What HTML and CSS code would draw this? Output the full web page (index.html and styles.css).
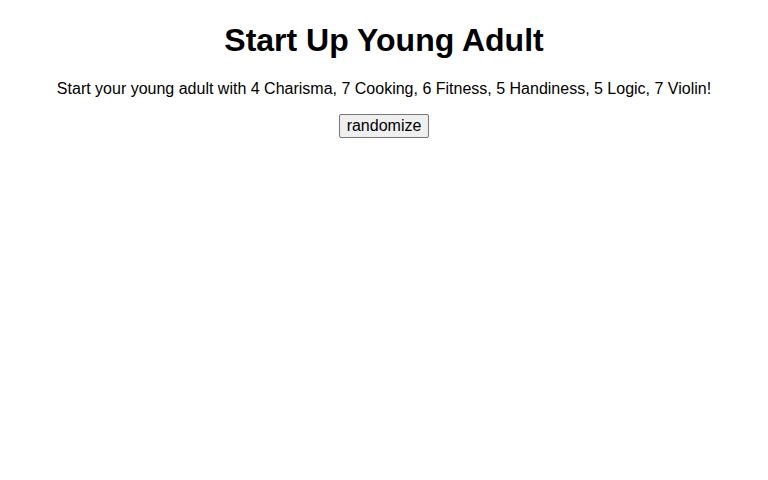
FILE: index.html
```html
<!DOCTYPE html>
<html lang="en">
<head>
<meta charset="utf-8">
<title>Start Up Young Adult</title>
<link rel="stylesheet" href="styles.css">
</head>
<body>
<main class="page">
  <h1 class="title">Start Up Young Adult</h1>
  <p class="result">Start your young adult with 4 Charisma, 7 Cooking, 6 Fitness, 5 Handiness, 5 Logic, 7 Violin!</p>
  <button class="randomize" type="button">randomize</button>
</main>
</body>
</html>
```
FILE: styles.css
```css
body {
  margin: 8px;
  font-family: "Liberation Sans", Arial, sans-serif;
  color: #000;
  background: #fff;
}

.page {
  text-align: center;
}

.title {
  font-size: 32px;
  font-weight: bold;
  margin: 14px 0 21px;
}

.result {
  font-size: 16px;
  margin: 16px 0;
}

.randomize {
  font-family: "Liberation Sans", Arial, sans-serif;
  font-size: 16px;
  padding: 2px 7px;
  background: #efefef;
  border: 1px solid #767676;
  border-radius: 2px;
  color: #000;
}
```
